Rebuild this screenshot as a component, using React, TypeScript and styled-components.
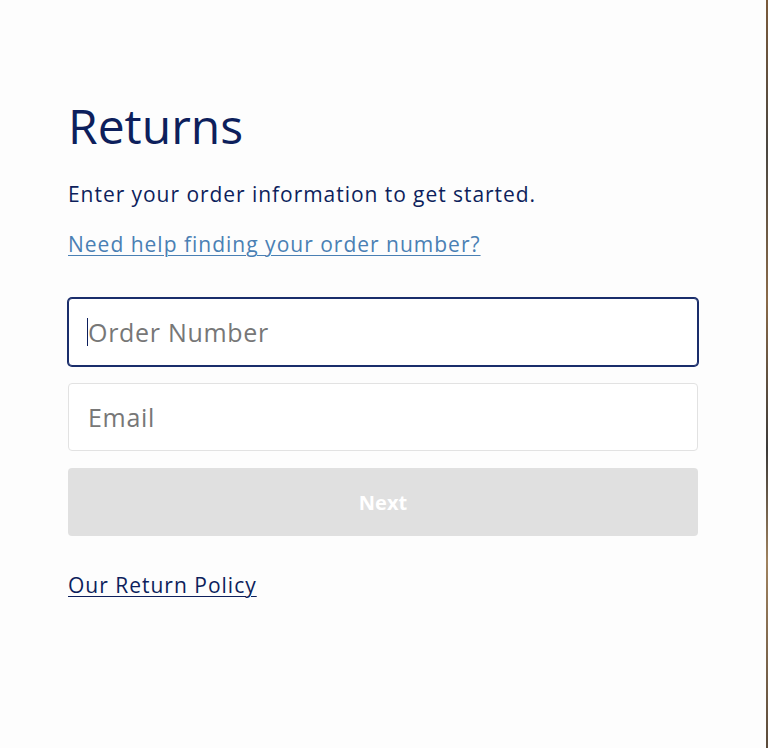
import React from "react";
import styled, { createGlobalStyle } from "styled-components";

const GlobalStyle = createGlobalStyle`
  html, body {
    margin: 0;
    padding: 0;
    background: #ffffff;
  }
  body {
    font-family: "Open Sans", Lato, sans-serif;
  }
`;

const Page = styled.div`
  display: flex;
  width: 768px;
  height: 748px;
  overflow: hidden;
`;

const Panel = styled.main`
  flex: 1;
  background: #fdfdfd;
  padding: 98px 0 0 68px;
`;

const Backdrop = styled.div`
  width: 2px;
  background: linear-gradient(
    180deg,
    #7a5a3a 0%,
    #4a4640 20%,
    #8a6a48 40%,
    #3c3a38 60%,
    #a0825e 75%,
    #5a4a3a 100%
  );
`;

const Form = styled.form`
  width: 630px;
  display: flex;
  flex-direction: column;
`;

const Title = styled.h1`
  margin: 0;
  font-size: 48px;
  line-height: 56px;
  font-weight: 500;
  color: #0d1f5c;
`;

const Lead = styled.p`
  margin: 26px 0 0;
  font-size: 21px;
  line-height: 28px;
  letter-spacing: 0.95px;
  color: #0d1f5c;
`;

const TextLink = styled.a<{ $tone: "help" | "policy" }>`
  align-self: flex-start;
  font-size: 21px;
  line-height: 28px;
  letter-spacing: 1px;
  color: ${(p) => (p.$tone === "help" ? "#4a80b4" : "#0d1f5c")};
  text-decoration: underline;
  text-underline-offset: 3px;
  text-decoration-thickness: 1px;
  margin-top: ${(p) => (p.$tone === "help" ? "22px" : "35px")};
`;

const Fields = styled.div`
  margin-top: 40px;
  display: flex;
  flex-direction: column;
  gap: 17px;
`;

const FieldWrap = styled.div`
  position: relative;
`;

const Caret = styled.span`
  position: absolute;
  left: 19px;
  top: 20px;
  width: 1px;
  height: 28px;
  background: #0d1f5c;
`;

const Field = styled.input<{ $active?: boolean }>`
  box-sizing: border-box;
  width: 100%;
  height: 68px;
  padding: 0 19px;
  font-family: "Open Sans", Lato, sans-serif;
  font-size: 25px;
  letter-spacing: 0.7px;
  color: #0d1f5c;
  background: #ffffff;
  border: 1px solid ${(p) => (p.$active ? "#1a2d6b" : "#e2e2e2")};
  border-radius: 4px;
  box-shadow: ${(p) => (p.$active ? "0 0 0 1px #1a2d6b" : "none")};
  outline: none;

  &::placeholder {
    color: #777777;
  }
`;

const NextButton = styled.button`
  height: 68px;
  border: none;
  border-radius: 4px;
  background: #e0e0e0;
  color: #ffffff;
  font-family: "Open Sans", Lato, sans-serif;
  font-size: 20px;
  font-weight: 700;
  cursor: not-allowed;
`;

export default function App() {
  return (
    <>
      <GlobalStyle />
      <Page>
        <Panel>
          <Form onSubmit={(e) => e.preventDefault()}>
            <Title>Returns</Title>
            <Lead>Enter your order information to get started.</Lead>
            <TextLink $tone="help" href="#">
              Need help finding your order number?
            </TextLink>
            <Fields>
              <FieldWrap>
                <Field $active placeholder="Order Number" />
                <Caret />
              </FieldWrap>
              <Field placeholder="Email" type="email" />
              <NextButton type="submit" disabled>
                Next
              </NextButton>
            </Fields>
            <TextLink $tone="policy" href="#">
              Our Return Policy
            </TextLink>
          </Form>
        </Panel>
        <Backdrop />
      </Page>
    </>
  );
}
